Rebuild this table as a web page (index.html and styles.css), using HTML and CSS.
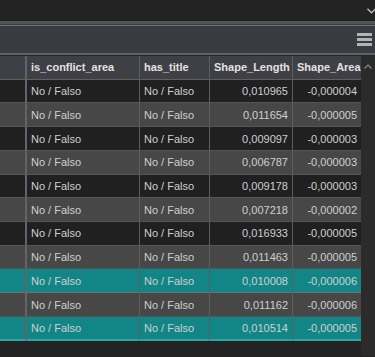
FILE: index.html
```html
<!DOCTYPE html>
<html lang="es">
<head>
  <meta charset="UTF-8">
  <meta name="viewport" content="width=device-width, initial-scale=1.0">
  <title>Tabla de atributos</title>
  <link rel="stylesheet" href="styles.css">
</head>
<body>
  <div class="top-bar">
    <svg class="chevron" width="9" height="6" viewBox="0 0 9 6">
      <path d="M0.5 0.8 L4.5 4.8 L8.5 0.8" fill="none" stroke="#bdbdbd" stroke-width="1.3"/>
    </svg>
  </div>
  <div class="band"></div>
  <div class="toolbar">
    <div class="menu-icon">
      <span></span><span></span><span></span>
    </div>
  </div>

  <div class="table-wrap">
    <div class="table-area">
      <div class="grid">
        <!-- Cabecera -->
        <div class="cell head"></div>
        <div class="cell head">is_conflict_area</div>
        <div class="cell head">has_title</div>
        <div class="cell head">Shape_Length</div>
        <div class="cell head">Shape_Area</div>

        <div class="cell dark"></div><div class="cell dark">No / Falso</div><div class="cell dark">No / Falso</div><div class="cell dark num">0,010965</div><div class="cell dark num">-0,000004</div>
        <div class="cell gray"></div><div class="cell gray">No / Falso</div><div class="cell gray">No / Falso</div><div class="cell gray num">0,011654</div><div class="cell gray num">-0,000005</div>
        <div class="cell dark"></div><div class="cell dark">No / Falso</div><div class="cell dark">No / Falso</div><div class="cell dark num">0,009097</div><div class="cell dark num">-0,000003</div>
        <div class="cell gray"></div><div class="cell gray">No / Falso</div><div class="cell gray">No / Falso</div><div class="cell gray num">0,006787</div><div class="cell gray num">-0,000003</div>
        <div class="cell dark"></div><div class="cell dark">No / Falso</div><div class="cell dark">No / Falso</div><div class="cell dark num">0,009178</div><div class="cell dark num">-0,000003</div>
        <div class="cell gray"></div><div class="cell gray">No / Falso</div><div class="cell gray">No / Falso</div><div class="cell gray num">0,007218</div><div class="cell gray num">-0,000002</div>
        <div class="cell dark"></div><div class="cell dark">No / Falso</div><div class="cell dark">No / Falso</div><div class="cell dark num">0,016933</div><div class="cell dark num">-0,000005</div>
        <div class="cell gray"></div><div class="cell gray">No / Falso</div><div class="cell gray">No / Falso</div><div class="cell gray num">0,011463</div><div class="cell gray num">-0,000005</div>
        <div class="cell sel"></div><div class="cell sel">No / Falso</div><div class="cell sel">No / Falso</div><div class="cell sel num">0,010008</div><div class="cell sel num">-0,000006</div>
        <div class="cell gray"></div><div class="cell gray">No / Falso</div><div class="cell gray">No / Falso</div><div class="cell gray num">0,011162</div><div class="cell gray num">-0,000006</div>
        <div class="cell sel last"></div><div class="cell sel last">No / Falso</div><div class="cell sel last">No / Falso</div><div class="cell sel last num">0,010514</div><div class="cell sel last num">-0,000005</div>
      </div>
    </div>
    <div class="scrollbar">
      <svg class="arrow-up" width="8" height="5" viewBox="0 0 8 5">
        <path d="M0.5 4.5 L4 1 L7.5 4.5" fill="none" stroke="#8a8a8a" stroke-width="1.2"/>
      </svg>
    </div>
  </div>
</body>
</html>
```

FILE: styles.css
```css
/* Tabla de atributos - tema oscuro */
:root {
  --bg-dark: #232323;
  --row-dark: #202020;
  --row-gray: #474747;
  --row-sel: #128686;
  --head-bg: #3e4045;
  --grid-line: #5e5e5e;
  --text: #cfcfcf;
  --text-head: #e2e2e2;
}

* {
  box-sizing: border-box;
}

body {
  margin: 0;
  width: 375px;
  height: 357px;
  overflow: hidden;
  background-color: var(--bg-dark);
  font-family: "Liberation Sans", Arial, sans-serif;
  font-size: 11px;
  color: var(--text);
}

.top-bar {
  height: 21px;
  background-color: #232323;
  display: flex;
  justify-content: flex-end;
  align-items: flex-start;
  padding-top: 8px;
  padding-right: 0;
}

.chevron {
  display: block;
  margin-right: -1px;
}

.band {
  height: 5px;
  background-color: #51555b;
  border-bottom: 1px solid #6c7075;
  box-shadow: inset 0 -1px 0 #3a3d42;
}

.toolbar {
  height: 29px;
  background-color: #383b40;
  border-bottom: 2px solid #5f6267;
  display: flex;
  justify-content: flex-end;
  align-items: flex-start;
  padding-top: 7px;
  padding-right: 3px;
}

.menu-icon {
  display: flex;
  flex-direction: column;
  gap: 2px;
}

.menu-icon span {
  display: block;
  width: 15px;
  height: 3px;
  background-color: #b4b4b4;
}

.table-wrap {
  display: flex;
  height: 301px;
  padding-top: 1px;
}

.table-area {
  width: 361px;
}

.grid {
  display: grid;
  grid-template-columns: 27px 113px 70px 83px 68px;
  grid-auto-rows: 23.73px;
}

.cell {
  border-right: 1px solid var(--grid-line);
  border-bottom: 1px solid #555555;
  padding: 0 4px;
  display: flex;
  align-items: center;
  white-space: nowrap;
  overflow: hidden;
}

.cell:nth-child(5n+1) {
  border-right: 2px solid #646464;
}

.cell:nth-child(5n) {
  border-right: none;
}

.head {
  background-color: var(--head-bg);
  color: var(--text-head);
  font-weight: 700;
  border-bottom-color: #606060;
}

.dark {
  background-color: var(--row-dark);
}

.gray {
  background-color: var(--row-gray);
}

.sel {
  background-color: var(--row-sel);
  border-bottom-color: #5c7878;
}

.sel.last {
  border-bottom: 2px solid #2aa6a6;
}

.num {
  justify-content: flex-end;
  padding-right: 4px;
}

.scrollbar {
  width: 14px;
  background-color: #2b2b2b;
  display: flex;
  justify-content: center;
  padding-top: 8px;
  align-items: flex-start;
}

.arrow-up {
  display: block;
}
```
